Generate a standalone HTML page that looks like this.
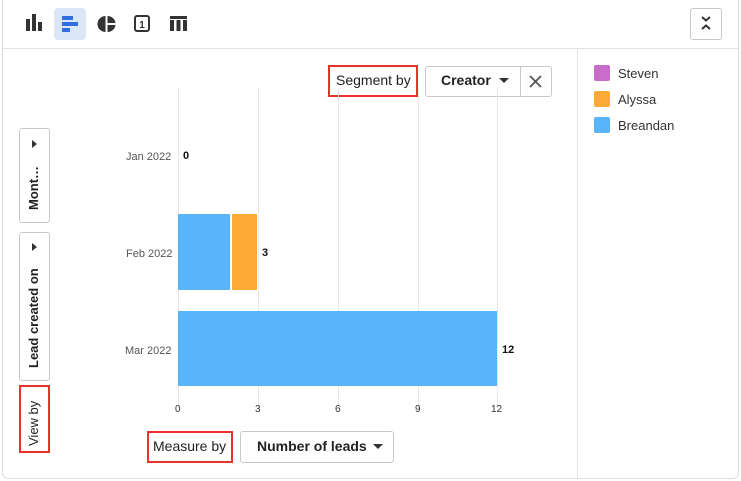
<!DOCTYPE html>
<html><head><style>
*{box-sizing:border-box;margin:0;padding:0}
body{width:741px;height:481px;background:#fff;font-family:"Liberation Sans",sans-serif;position:relative;overflow:hidden;color:#222}
.a{position:absolute}
.frame{left:2px;top:-4px;width:737px;height:483px;border:1px solid #ddd;border-radius:6px}
.btn{border:1px solid #c8c8c8;border-radius:3px;background:#fff}
.red{border:2px solid #e8322a}
.grid{width:1px;background:#e8e8e8;top:88px;height:320px}
.lbl{font-size:11px;color:#555}
.tick{font-size:10px;color:#333}
.val{font-size:11px;font-weight:bold;color:#111}
.sq{width:16px;height:16px;border-radius:2px;left:594px}
.lg{left:618px;font-size:13px;color:#333}
.vt{writing-mode:vertical-rl;transform:rotate(180deg);font-size:13px;font-weight:bold;color:#222}
</style></head><body>
<div class="a frame"></div>
<div class="a" style="left:3px;top:48px;width:735px;height:1px;background:#e2e2e2"></div>
<div class="a" style="left:577px;top:49px;width:1px;height:430px;background:#e2e2e2"></div>
<svg class="a" style="left:0;top:0" width="200" height="48">
<g fill="#333">
<rect x="26" y="19" width="4" height="12"/><rect x="32" y="14" width="4" height="17"/><rect x="38" y="22" width="4" height="9"/>
</g>
<rect x="54" y="8" width="32" height="32" rx="4" fill="#dbe6f6"/>
<g fill="#2f6fde"><rect x="62" y="16" width="11" height="4"/><rect x="62" y="22" width="16" height="4"/><rect x="62" y="28" width="8" height="4"/></g>
<g fill="#333"><path d="M105.5 16 A8 8 0 0 0 105.5 32 Z"/><path d="M107.5 16 A8 8 0 0 1 115.5 23 L107.5 23Z"/><path d="M107.5 25 L115.5 25 A8 8 0 0 1 107.5 32Z"/></g>
<rect x="135" y="16" width="14" height="15" rx="2" fill="none" stroke="#333" stroke-width="2"/>
<text x="142" y="28" font-size="10" font-weight="bold" text-anchor="middle" fill="#333" font-family="Liberation Sans">1</text>
<g fill="#333"><rect x="170" y="16" width="17" height="3"/><rect x="170" y="20" width="4" height="11"/><rect x="176.5" y="20" width="4" height="11"/><rect x="183" y="20" width="4" height="11"/></g>
</svg>
<div class="a btn" style="left:690px;top:8px;width:32px;height:32px"></div>
<svg class="a" style="left:690px;top:8px" width="32" height="32"><path d="M12 9 L16 12.5 L20 9 M12 21 L16 17.5 L20 21" stroke="#333" stroke-width="2" fill="none"/></svg>
<div class="a red" style="left:328px;top:65px;width:90px;height:32px"></div>
<div class="a" style="left:336px;top:72px;font-size:14px">Segment by</div>
<div class="a btn" style="left:425px;top:66px;width:127px;height:31px"></div>
<div class="a" style="left:520px;top:66px;width:1px;height:31px;background:#c8c8c8"></div>
<div class="a" style="left:441px;top:72px;font-size:14px;font-weight:bold">Creator</div>
<svg class="a" style="left:498px;top:77px" width="12" height="8"><path d="M1 1 L11 1 L6 6Z" fill="#333"/></svg>
<svg class="a" style="left:528px;top:74px" width="16" height="16"><path d="M2 2 L13 13 M13 2 L2 13" stroke="#555" stroke-width="1.8"/></svg>
<div class="a sq" style="top:65px;background:#c86dc9"></div><div class="a lg" style="top:66px">Steven</div>
<div class="a sq" style="top:91px;background:#fcaa35"></div><div class="a lg" style="top:92px">Alyssa</div>
<div class="a sq" style="top:117px;background:#5ab4fa"></div><div class="a lg" style="top:118px">Breandan</div>
<div class="a grid" style="left:178px"></div>
<div class="a grid" style="left:258px"></div>
<div class="a grid" style="left:338px"></div>
<div class="a grid" style="left:418px"></div>
<div class="a grid" style="left:497px"></div>
<div class="a" style="left:178px;top:214px;width:52px;height:76px;background:#5ab4fa"></div>
<div class="a" style="left:232px;top:214px;width:25px;height:76px;background:#fcaa35"></div>
<div class="a" style="left:178px;top:311px;width:319px;height:75px;background:#5ab4fa"></div>
<div class="a val" style="left:183px;top:150px">0</div>
<div class="a val" style="left:262px;top:247px">3</div>
<div class="a val" style="left:502px;top:344px">12</div>
<div class="a lbl" style="left:126px;top:151px">Jan 2022</div>
<div class="a lbl" style="left:126px;top:248px">Feb 2022</div>
<div class="a lbl" style="left:125px;top:345px">Mar 2022</div>
<div class="a tick" style="left:175px;top:404px">0</div>
<div class="a tick" style="left:255px;top:404px">3</div>
<div class="a tick" style="left:335px;top:404px">6</div>
<div class="a tick" style="left:415px;top:404px">9</div>
<div class="a tick" style="left:491px;top:404px">12</div>
<div class="a red" style="left:147px;top:431px;width:86px;height:32px"></div>
<div class="a" style="left:153px;top:438px;font-size:14px">Measure by</div>
<div class="a btn" style="left:240px;top:431px;width:154px;height:32px"></div>
<div class="a" style="left:257px;top:438px;font-size:14px;font-weight:bold">Number of leads</div>
<svg class="a" style="left:372px;top:443px" width="12" height="8"><path d="M1 1 L11 1 L6 6Z" fill="#333"/></svg>
<div class="a btn" style="left:19px;top:128px;width:31px;height:95px"></div>
<svg class="a" style="left:31px;top:139px" width="8" height="10"><path d="M1 1 L6 5 L1 9Z" fill="#333"/></svg>
<div class="a vt" style="left:26px;top:158px;height:52px">Mont…</div>
<div class="a btn" style="left:19px;top:232px;width:31px;height:149px"></div>
<svg class="a" style="left:31px;top:242px" width="8" height="10"><path d="M1 1 L6 5 L1 9Z" fill="#333"/></svg>
<div class="a vt" style="left:26px;top:262px;height:106px">Lead created on</div>
<div class="a red" style="left:19px;top:385px;width:31px;height:68px"></div>
<div class="a vt" style="left:26px;top:392px;height:54px;font-weight:normal">View by</div>
</body></html>
